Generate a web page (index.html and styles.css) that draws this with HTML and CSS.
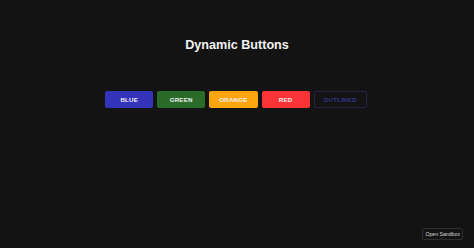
FILE: index.html
```html
<!DOCTYPE html>
<html>
<head>
<meta charset="utf-8">
<link rel="stylesheet" href="styles.css">
</head>
<body>
<main class="app">
  <h1 class="title">Dynamic Buttons</h1>
  <div class="buttons">
    <button class="btn btn-blue">BLUE</button>
    <button class="btn btn-green">GREEN</button>
    <button class="btn btn-orange">ORANGE</button>
    <button class="btn btn-red">RED</button>
    <button class="btn btn-outlined">OUTLINED</button>
  </div>
</main>
<button class="sandbox">Open Sandbox</button>
</body>
</html>
```
FILE: styles.css
```css
html, body {
  margin: 0;
  padding: 0;
  height: 100%;
  background: #131313;
  font-family: "Liberation Sans", Arial, sans-serif;
}
.app {
  display: flex;
  flex-direction: column;
  align-items: center;
  padding-top: 37px;
}
.title {
  margin: 0;
  color: #f2f2f2;
  font-size: 12.6px;
  font-weight: bold;
  line-height: 17px;
}
.buttons {
  display: flex;
  gap: 4px;
  margin-top: 37px;
  margin-right: 2px;
}
.btn {
  min-width: 48px;
  height: 17px;
  padding: 0 9px;
  border: 1px solid transparent;
  border-radius: 2px;
  font-family: "Liberation Sans", Arial, sans-serif;
  font-size: 6.2px;
  font-weight: bold;
  letter-spacing: 0.2px;
  color: #f0f0f0;
  box-sizing: border-box;
  cursor: pointer;
}
.btn-blue { background: #3434bb; }
.btn-green { background: #2b6b29; }
.btn-orange { background: #fda60f; }
.btn-red { background: #f93437; }
.btn-outlined {
  background: transparent;
  border-color: #24244a;
  color: #33338f;
  min-width: 53px;
}
.sandbox {
  position: fixed;
  right: 11px;
  bottom: 8px;
  height: 12px;
  padding: 0 2px;
  background: #141414;
  border: 1px solid #2e2e2e;
  border-radius: 2px;
  color: #d8d8d8;
  font-family: "Liberation Sans", Arial, sans-serif;
  font-size: 5.2px;
  line-height: 10px;
}
```
